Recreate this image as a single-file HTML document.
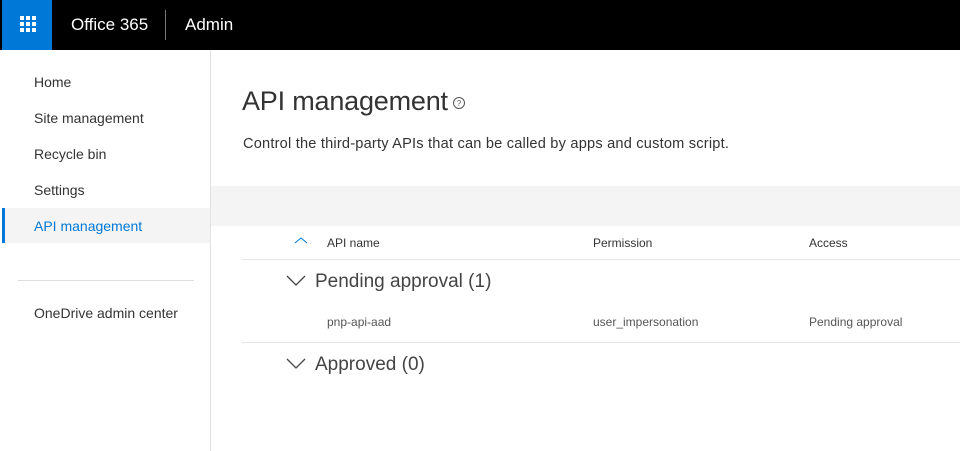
<!DOCTYPE html>
<html><head><style>
body{margin:0;width:960px;height:451px;overflow:hidden;background:#fff;font-family:"Liberation Sans",sans-serif;position:relative}
.top{position:absolute;left:0;top:0;width:960px;height:50px;background:#000}
.waf{position:absolute;left:2px;top:0;width:50px;height:50px;background:#0078d7}
.t{position:absolute;color:#fff;font-size:17px;top:15px}
.sep{position:absolute;left:165px;top:10px;width:1px;height:30px;background:#777}
.side{position:absolute;left:0;top:50px;width:210px;height:401px;border-right:1px solid #e1e1e1}
.ni{position:absolute;left:34px;font-size:14px;color:#333}
.sel{position:absolute;left:2px;top:208px;width:208px;height:35px;background:#f4f4f4;border-left:3px solid #0078d7;box-sizing:border-box}
.a{position:absolute;white-space:nowrap}
.line{position:absolute;left:242px;width:718px;height:1px;background:#e5e5e5}
</style></head><body>
<div class="top"></div>
<div class="waf"><svg width="50" height="50">
<g fill="#fff">
<rect x="18" y="16" width="4" height="4"/><rect x="24" y="16" width="4" height="4"/><rect x="30" y="16" width="4" height="4"/>
<rect x="18" y="22" width="4" height="4"/><rect x="24" y="22" width="4" height="4"/><rect x="30" y="22" width="4" height="4"/>
<rect x="18" y="28" width="4" height="4"/><rect x="24" y="28" width="4" height="4"/><rect x="30" y="28" width="4" height="4"/>
</g></svg></div>
<div class="t" style="left:71px">Office 365</div>
<div class="sep"></div>
<div class="t" style="left:185px">Admin</div>
<div class="side"></div>
<div class="sel"></div>
<div class="ni" style="top:74px">Home</div>
<div class="ni" style="top:110px">Site management</div>
<div class="ni" style="top:146px">Recycle bin</div>
<div class="ni" style="top:182px">Settings</div>
<div class="ni" style="top:218px;color:#0078d7">API management</div>
<div style="position:absolute;left:18px;top:280px;width:176px;height:1px;background:#ddd"></div>
<div class="ni" style="top:305px">OneDrive admin center</div>
<div class="a" style="left:242px;top:86px;font-size:27px;color:#333;letter-spacing:-0.2px">API management</div>
<svg class="a" style="left:452px;top:96px" width="14" height="14"><circle cx="7" cy="7" r="5.5" fill="none" stroke="#555" stroke-width="1"/><text x="7" y="10" font-size="8" text-anchor="middle" fill="#555" font-family="Liberation Sans">?</text></svg>
<div class="a" style="left:243px;top:136px;font-size:14.6px;color:#333;letter-spacing:0.2px">Control the third-party APIs that can be called by apps and custom script.</div>
<div style="position:absolute;left:211px;top:186px;width:749px;height:40px;background:#f4f4f4"></div>
<svg class="a" style="left:294px;top:236px" width="14" height="10"><path d="M1 7 L7 2 L13 7" fill="none" stroke="#0078d7" stroke-width="1"/></svg>
<div class="a" style="left:327px;top:236px;font-size:12px;color:#333">API name</div>
<div class="a" style="left:593px;top:236px;font-size:12px;color:#333">Permission</div>
<div class="a" style="left:809px;top:236px;font-size:12px;color:#333">Access</div>
<div class="line" style="top:259px"></div>
<svg class="a" style="left:286px;top:274px" width="20" height="14"><path d="M1 2 L10 11 L19 2" fill="none" stroke="#444" stroke-width="1.3"/></svg>
<div class="a" style="left:315px;top:271px;font-size:19px;color:#444">Pending approval (1)</div>
<div class="a" style="left:327px;top:315px;font-size:12px;color:#555">pnp-api-aad</div>
<div class="a" style="left:593px;top:315px;font-size:12px;color:#555">user_impersonation</div>
<div class="a" style="left:809px;top:315px;font-size:12px;color:#555">Pending approval</div>
<div class="line" style="top:342px"></div>
<svg class="a" style="left:286px;top:357px" width="20" height="14"><path d="M1 2 L10 11 L19 2" fill="none" stroke="#444" stroke-width="1.3"/></svg>
<div class="a" style="left:315px;top:354px;font-size:19px;color:#444">Approved (0)</div>
</body></html>
